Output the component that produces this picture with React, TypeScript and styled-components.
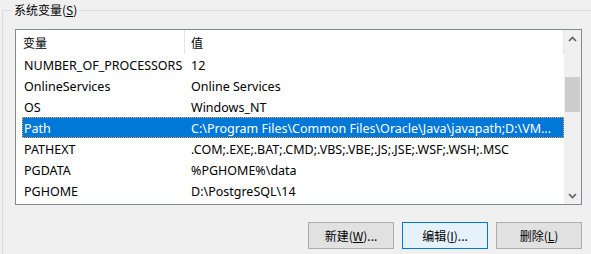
import React from "react";
import styled, { createGlobalStyle } from "styled-components";

const GlobalStyle = createGlobalStyle`
  html, body {
    margin: 0;
    padding: 0;
    background: #f0f0f0;
    overflow: hidden;
  }
  body {
    font-family: "Noto Sans", "Noto Sans CJK SC", sans-serif;
    font-size: 12px;
    color: #000;
  }
`;

const Page = styled.div`
  width: 591px;
  height: 254px;
  overflow: hidden;
  background: #f0f0f0;
`;

const GroupBox = styled.fieldset`
  margin: 0 0 0 2px;
  padding: 0 0 0 12px;
  width: 620px;
  height: 300px;
  box-sizing: border-box;
  border: 1px solid #dcdcdc;
`;

const GroupTitle = styled.legend`
  margin-left: -4px;
  padding: 0 3px;
  line-height: 20px;
  height: 20px;
  font-family: "Noto Sans CJK SC", "Noto Sans", sans-serif;
`;

const ListView = styled.div`
  margin-top: 9px;
  width: 567px;
  height: 176px;
  box-sizing: border-box;
  border: 1px solid #828790;
  background: #fff;
  display: flex;
`;

const Table = styled.div`
  flex: 1;
  display: flex;
  flex-direction: column;
  overflow: hidden;
`;

const Header = styled.div`
  height: 24px;
  display: grid;
  grid-template-columns: 169px 1fr;
  flex-shrink: 0;
`;

const HeaderCell = styled.div<{ $indent: number }>`
  display: flex;
  align-items: center;
  padding-left: ${(p) => p.$indent}px;
  border-right: 1px solid #e5e5e5;
  font-family: "Noto Sans CJK SC", "Noto Sans", sans-serif;
`;

const Rows = styled.div`
  padding-left: 6px;
`;

const Row = styled.div<{ $selected?: boolean }>`
  height: 21px;
  display: grid;
  grid-template-columns: 163px 1fr;
  align-items: center;
  box-sizing: border-box;
  padding-top: 1px;
  font-size: 12.5px;
  background: ${(p) => (p.$selected ? "#0078d7" : "transparent")};
  color: ${(p) => (p.$selected ? "#fff" : "#000")};
  outline: ${(p) => (p.$selected ? "1px dotted #f7a24a" : "none")};
  outline-offset: -1px;
`;

const Cell = styled.div<{ $indent: number }>`
  padding-left: ${(p) => p.$indent}px;
  white-space: nowrap;
  overflow: hidden;
`;

const ScrollBar = styled.div`
  width: 17px;
  background: #f0f0f0;
  display: flex;
  flex-direction: column;
  flex-shrink: 0;
`;

const ArrowButton = styled.div`
  height: 17px;
  display: flex;
  align-items: center;
  justify-content: center;
`;

const Track = styled.div`
  flex: 1;
  padding-top: 30px;
`;

const Thumb = styled.div`
  margin: 0 1px;
  height: 35px;
  background: #cdcdcd;
`;

const ButtonRow = styled.div`
  margin-top: 17px;
  width: 567px;
  display: flex;
  justify-content: flex-end;
  gap: 8px;
`;

const Button = styled.button<{ $default?: boolean }>`
  width: 86px;
  height: 27px;
  padding: 0;
  box-sizing: border-box;
  border: 1px solid ${(p) => (p.$default ? "#0078d7" : "#adadad")};
  background: ${(p) => (p.$default ? "#e5f1fb" : "#e1e1e1")};
  font-family: "Noto Sans CJK SC", "Noto Sans", sans-serif;
  font-size: 12px;
  color: #000;
`;

const Chevron = ({ up }: { up?: boolean }) => (
  <svg width="9" height="6" viewBox="0 0 9 6">
    <polyline
      points={up ? "1,5 4.5,1.5 8,5" : "1,1 4.5,4.5 8,1"}
      fill="none"
      stroke="#606060"
      strokeWidth="1.6"
    />
  </svg>
);

const vars: [string, string][] = [
  ["NUMBER_OF_PROCESSORS", "12"],
  ["OnlineServices", "Online Services"],
  ["OS", "Windows_NT"],
  ["Path", "C:\\Program Files\\Common Files\\Oracle\\Java\\javapath;D:\\VM..."],
  ["PATHEXT", ".COM;.EXE;.BAT;.CMD;.VBS;.VBE;.JS;.JSE;.WSF;.WSH;.MSC"],
  ["PGDATA", "%PGHOME%\\data"],
  ["PGHOME", "D:\\PostgreSQL\\14"],
];

export default function App() {
  return (
    <Page>
      <GlobalStyle />
      <GroupBox>
        <GroupTitle>
          系统变量(<u>S</u>)
        </GroupTitle>
        <ListView>
          <Table>
            <Header>
              <HeaderCell $indent={7}>变量</HeaderCell>
              <HeaderCell $indent={6}>值</HeaderCell>
            </Header>
            <Rows>
              {vars.map(([name, value]) => (
                <Row key={name} $selected={name === "Path"}>
                  <Cell $indent={2}>{name}</Cell>
                  <Cell $indent={6}>{value}</Cell>
                </Row>
              ))}
            </Rows>
          </Table>
          <ScrollBar>
            <ArrowButton>
              <Chevron up />
            </ArrowButton>
            <Track>
              <Thumb />
            </Track>
            <ArrowButton>
              <Chevron />
            </ArrowButton>
          </ScrollBar>
        </ListView>
        <ButtonRow>
          <Button>
            新建(<u>W</u>)...
          </Button>
          <Button $default>
            编辑(<u>I</u>)...
          </Button>
          <Button>
            删除(<u>L</u>)
          </Button>
        </ButtonRow>
      </GroupBox>
    </Page>
  );
}
